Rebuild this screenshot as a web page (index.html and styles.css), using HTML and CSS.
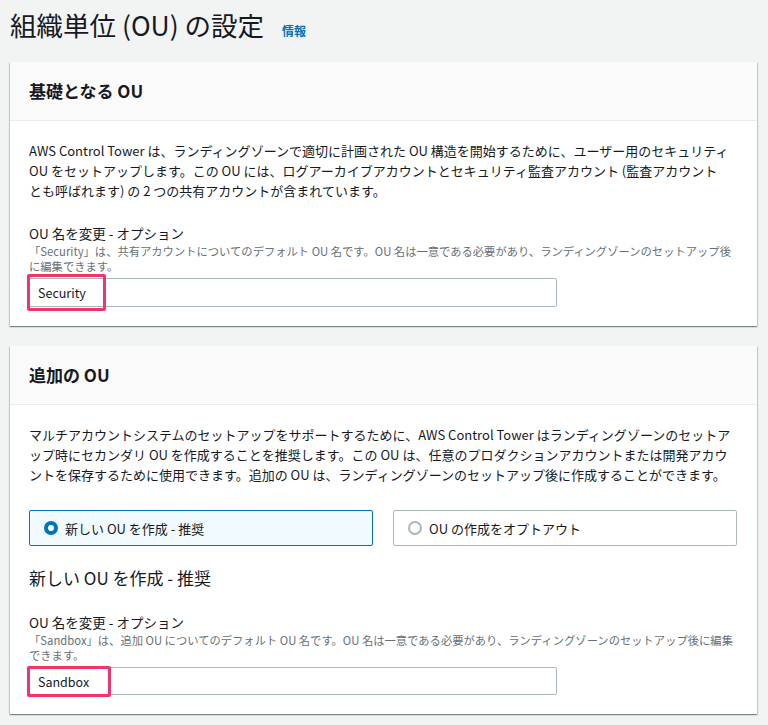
FILE: index.html
```html
<!DOCTYPE html>
<html lang="ja">
<head>
    <meta charset="UTF-8">
    <meta name="viewport" content="width=device-width, initial-scale=1.0">
    <title>組織単位 (OU) の設定</title>
    <link rel="stylesheet" href="styles.css">
</head>
<body>
    <div class="page-head">
        <h1 class="page-title">組織単位 (OU) の設定</h1>
        <a class="info-link" href="#">情報</a>
    </div>

    <section class="card">
        <div class="card-head">
            <h2>基礎となる OU</h2>
        </div>
        <div class="card-body">
            <p class="lead">AWS Control Tower は、ランディングゾーンで適切に計画された OU 構造を開始するために、ユーザー用のセキュリティ OU をセットアップします。この OU には、ログアーカイブアカウントとセキュリティ監査アカウント (監査アカウント<span class="keep">とも</span>呼ばれます) の 2 つの共有アカウントが含まれています。</p>

            <div class="field field-first">
                <label class="field-label" for="ou-security">OU 名を変更 - オプション</label>
                <div class="field-desc">「Security」は、共有アカウントについてのデフォルト OU 名です。OU 名は一意である必要があり、ランディングゾーンのセットアップ後に編集できます。</div>
                <div class="input-wrap">
                    <input class="text-input" id="ou-security" type="text" value="Security">
                    <span class="mark mark-security"></span>
                </div>
            </div>
        </div>
    </section>

    <section class="card">
        <div class="card-head">
            <h2>追加の OU</h2>
        </div>
        <div class="card-body">
            <p class="lead">マルチアカウントシステムのセットアップをサポートするために、AWS Control Tower はランディングゾーンのセットアップ時にセカンダリ OU を作成することを推奨します。この OU は、任意のプロダクションアカウントまたは開発アカウントを保存するために使用できます。追加の OU は、ランディングゾーンのセットアップ後に作成することができます。</p>

            <div class="tiles">
                <label class="tile selected">
                    <span class="radio on"></span>
                    <span>新しい OU を作成 - 推奨</span>
                </label>
                <label class="tile">
                    <span class="radio"></span>
                    <span>OU の作成をオプトアウト</span>
                </label>
            </div>

            <h3 class="sub-title">新しい OU を作成 - 推奨</h3>

            <div class="field">
                <label class="field-label" for="ou-sandbox">OU 名を変更 - オプション</label>
                <div class="field-desc">「Sandbox」は、追加 OU についてのデフォルト OU 名です。OU 名は一意である必要があり、ランディングゾーンのセットアップ後に編集できます。</div>
                <div class="input-wrap">
                    <input class="text-input short" id="ou-sandbox" type="text" value="Sandbox">
                    <span class="mark mark-sandbox"></span>
                </div>
            </div>
        </div>
    </section>
</body>
</html>
```

FILE: styles.css
```css
body {
    margin: 0;
    padding: 6px 11px 0 10px;
    background-color: #f2f3f3;
    font-family: "Noto Sans CJK JP", "Noto Sans", sans-serif;
    color: #16191f;
}

.page-head {
    display: flex;
    align-items: baseline;
    gap: 18px;
    height: 36px;
    margin-bottom: 20px;
}
.page-title {
    margin: 0;
    font-size: 26.5px;
    line-height: 38px;
    font-weight: 400;
    color: #16191f;
}
.info-link {
    font-size: 12px;
    font-weight: 700;
    color: #0073bb;
    text-decoration: none;
}

.card {
    background: #ffffff;
    box-shadow: 0 1px 1px 0 rgba(0, 28, 36, 0.3), 1px 1px 1px 0 rgba(0, 28, 36, 0.15), -1px 1px 1px 0 rgba(0, 28, 36, 0.15);
    margin-bottom: 20px;
}
.card-head {
    display: flex;
    align-items: center;
    height: 58px;
    padding: 0 19px;
    background: #fafafa;
    border-bottom: 1px solid #eaeded;
}
.card-head h2 {
    margin: 0;
    font-size: 17px;
    font-weight: 700;
    line-height: 22px;
}
.card-body {
    padding: 20px 20px 19px 19px;
}

.lead {
    margin: 0;
    font-size: 13px;
    line-height: 20px;
}
.keep {
    white-space: nowrap;
}

.field {
    margin-top: 23px;
}
.field-first {
    margin-top: 22px;
}
.field-label {
    display: block;
    font-size: 13.5px;
    line-height: 20px;
}
.field-desc {
    font-size: 11.3px;
    line-height: 15px;
    color: #687078;
    padding-top: 1px;
}
.input-wrap {
    position: relative;
    width: 528px;
    margin-top: 4px;
}
.text-input {
    box-sizing: border-box;
    display: block;
    width: 100%;
    height: 29px;
    padding: 0 8px;
    border: 1px solid #aab7b8;
    border-radius: 2px;
    font-family: inherit;
    font-size: 12.5px;
    color: #16191f;
    background: #ffffff;
}
.text-input.short {
    height: 28px;
}

/* pink call-out frames drawn over the inputs */
.mark {
    position: absolute;
    border: 3px solid #f0346c;
    border-radius: 2px;
    pointer-events: none;
}
.mark-security {
    left: -2px;
    top: -4px;
    width: 73px;
    height: 31px;
}
.mark-sandbox {
    left: -2px;
    top: -1px;
    width: 78px;
    height: 25px;
}

.tiles {
    display: grid;
    grid-template-columns: 1fr 1fr;
    gap: 20px;
    margin-top: 25px;
}
.tile {
    box-sizing: border-box;
    display: flex;
    align-items: center;
    gap: 7px;
    height: 36px;
    padding: 0 14px;
    border: 1px solid #aab7b8;
    border-radius: 2px;
    font-size: 13px;
    background: #ffffff;
}
.tile.selected {
    border-color: #0073bb;
    background: #f1faff;
}
.radio {
    box-sizing: border-box;
    width: 14px;
    height: 14px;
    border-radius: 50%;
    border: 2px solid #aab7b8;
    background: #ffffff;
}
.radio.on {
    border: 4px solid #0073bb;
}

.sub-title {
    margin: 21px 0 0;
    font-size: 17px;
    font-weight: 400;
    line-height: 22px;
}
```
